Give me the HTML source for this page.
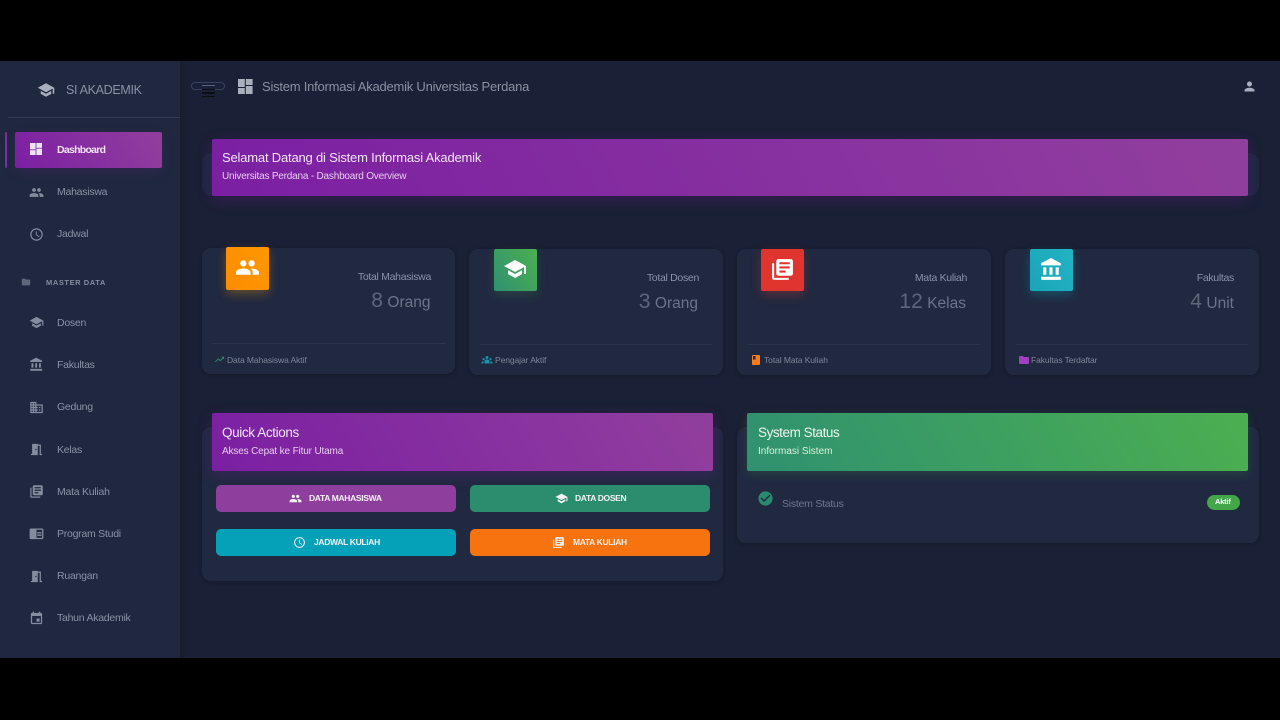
<!DOCTYPE html>
<html><head><meta charset="utf-8"><title>SI Akademik</title>
<style>
*{box-sizing:border-box}
html,body{margin:0;padding:0;width:1280px;height:720px;overflow:hidden;background:#000;font-family:"Liberation Sans",sans-serif}
.a{position:absolute}
#app{position:absolute;left:0;top:61px;width:1280px;height:597px;background:#1a2035;overflow:hidden}
#root{position:absolute;left:0;top:-61px;width:1280px;height:720px;filter:blur(.35px)}
.t{position:absolute;white-space:nowrap;line-height:1}
.card{position:absolute;background:#202940;border-radius:9px;box-shadow:0 1px 4px rgba(0,0,0,.2)}
.hdr{position:absolute;border-radius:2px}
.pur{background:linear-gradient(60deg,#7b1fa2,#913f9e);box-shadow:0 4px 14px rgba(123,31,162,.3)}
.grn{background:linear-gradient(60deg,#2f9170,#4caf50);box-shadow:0 3px 10px rgba(76,175,80,.2)}
.box{position:absolute;width:43px;height:42px;border-radius:2px}
.line{position:absolute;height:1px;background:#2a3550}
svg{position:absolute;display:block}
.nav{color:#8b92a6;font-size:10.5px;letter-spacing:-.25px;left:57px}
.btn{position:absolute;height:27px;border-radius:5px;width:240px}
.bt{color:#f2f2f2;font-size:8.5px;font-weight:bold;letter-spacing:-.33px}
.lab{color:#8b92a6;font-size:10.5px;letter-spacing:-.3px}
.num{color:#5f6679;font-size:21px}
.unit{color:#6d7487;font-size:15.5px}
.foot{color:#7f8699;font-size:8.5px;letter-spacing:-.08px}
.ni{left:28.5px}
</style></head><body>
<svg width="0" height="0" style="position:absolute"><defs>
<symbol id="school" viewBox="0 0 24 24"><path d="M5 13.18v4L12 21l7-3.82v-4L12 17l-7-3.82zM12 3L1 9l11 6 9-4.91V17h2V9L12 3z"/></symbol>
<symbol id="people" viewBox="0 0 24 24"><path d="M16 11c1.66 0 2.99-1.34 2.99-3S17.66 5 16 5c-1.66 0-3 1.34-3 3s1.34 3 3 3zm-8 0c1.66 0 2.99-1.34 2.99-3S9.66 5 8 5C6.34 5 5 6.34 5 8s1.34 3 3 3zm0 2c-2.33 0-7 1.17-7 3.5V19h14v-2.5c0-2.33-4.67-3.5-7-3.5zm8 0c-.29 0-.62.02-.97.05 1.16.84 1.97 1.97 1.97 3.45V19h6v-2.5c0-2.33-4.67-3.5-7-3.5z"/></symbol>
<symbol id="clock" viewBox="0 0 24 24"><path d="M11.99 2C6.47 2 2 6.48 2 12s4.47 10 9.99 10C17.52 22 22 17.52 22 12S17.52 2 11.99 2zM12 20c-4.42 0-8-3.58-8-8s3.58-8 8-8 8 3.58 8 8-3.58 8-8 8zm.5-13H11v6l5.25 3.15.75-1.23-4.5-2.67z"/></symbol>
<symbol id="folder" viewBox="0 0 24 24"><path d="M10 4H4c-1.1 0-1.99.9-1.99 2L2 18c0 1.1.9 2 2 2h16c1.1 0 2-.9 2-2V8c0-1.1-.9-2-2-2h-8l-2-2z"/></symbol>
<symbol id="bank" viewBox="0 0 24 24"><path d="M4 10v7h3v-7H4zm6 0v7h3v-7h-3zM2 22h19v-3H2v3zm14-12v7h3v-7h-3zm-4.5-9L2 6v2h19V6l-9.5-5z"/></symbol>
<symbol id="domain" viewBox="0 0 24 24"><path d="M12 7V3H2v18h20V7H12zM6 19H4v-2h2v2zm0-4H4v-2h2v2zm0-4H4V9h2v2zm0-4H4V5h2v2zm4 12H8v-2h2v2zm0-4H8v-2h2v2zm0-4H8V9h2v2zm0-4H8V5h2v2zm10 12h-8v-2h2v-2h-2v-2h2v-2h-2V9h8v10zm-2-8h-2v2h2v-2zm0 4h-2v2h2v-2z"/></symbol>
<symbol id="room" viewBox="0 0 24 24"><path d="M14 6v15H3v-2h2V3h9v1h5v15h2v2h-4V6h-3zm-4 5v2h2v-2h-2z"/></symbol>
<symbol id="lib" viewBox="0 0 24 24"><path d="M4 6H2v14c0 1.1.9 2 2 2h14v-2H4V6zm16-4H8c-1.1 0-2 .9-2 2v12c0 1.1.9 2 2 2h12c1.1 0 2-.9 2-2V4c0-1.1-.9-2-2-2zm-1 9H9V9h10v2zm-4 4H9v-2h6v2zm4-8H9V5h10v2z"/></symbol>
<symbol id="reader" viewBox="0 0 24 24"><path d="M13 12h7v1.5h-7zm0-2.5h7V11h-7zm0 5h7V16h-7zM21 4H3c-1.1 0-2 .9-2 2v13c0 1.1.9 2 2 2h18c1.1 0 2-.9 2-2V6c0-1.1-.9-2-2-2zm0 15h-9V6h9v13z"/></symbol>
<symbol id="event" viewBox="0 0 24 24"><path d="M17 12h-5v5h5v-5zM16 1v2H8V1H6v2H5c-1.11 0-1.99.9-1.99 2L3 19c0 1.1.89 2 2 2h14c1.1 0 2-.9 2-2V5c0-1.1-.9-2-2-2h-1V1h-2zm3 18H5V8h14v11z"/></symbol>
<symbol id="person" viewBox="0 0 24 24"><path d="M12 12c2.21 0 4-1.79 4-4s-1.79-4-4-4-4 1.79-4 4 1.79 4 4 4zm0 2c-2.67 0-8 1.34-8 4v2h16v-2c0-2.66-5.33-4-8-4z"/></symbol>
<symbol id="trend" viewBox="0 0 24 24"><path d="M16 6l2.29 2.29-4.88 4.88-4-4L2 16.59 3.41 18l6-6 4 4 6.3-6.29L22 12V6z"/></symbol>
<symbol id="check" viewBox="0 0 24 24"><path d="M12 2C6.48 2 2 6.48 2 12s4.48 10 10 10 10-4.48 10-10S17.52 2 12 2zm-2 15l-5-5 1.41-1.41L10 14.17l7.59-7.59L19 8l-9 9z"/></symbol>
<symbol id="book" viewBox="0 0 24 24"><path d="M18 2H6c-1.1 0-2 .9-2 2v16c0 1.1.9 2 2 2h12c1.1 0 2-.9 2-2V4c0-1.1-.9-2-2-2zM6 4h5v8l-2.5-1.5L6 12V4z"/></symbol>
<symbol id="groups" viewBox="0 0 24 24"><path d="M1 19v-2c0-1.5 2-2.6 4-2.8V19H1zm6 0v-5c0-1.7 2.5-3 5-3s5 1.3 5 3v5H7zm12 0v-4.8c2 .2 4 1.3 4 2.8v2h-4zM12 10a3 3 0 1 0 0-6 3 3 0 0 0 0 6zM5 12.5a2.2 2.2 0 1 0 0-4.4 2.2 2.2 0 0 0 0 4.4zm14 0a2.2 2.2 0 1 0 0-4.4 2.2 2.2 0 0 0 0 4.4z"/></symbol>
</defs></svg>

<div id="app"><div id="root">

<!-- main area -->
<svg style="left:238px;top:79px" width="15" height="15" viewBox="0 0 15 15" fill="#a9afbd"><rect x="0" y="0" width="6.8" height="8"/><rect x="0" y="9" width="6.8" height="6"/><rect x="7.8" y="0" width="6.8" height="6"/><rect x="7.8" y="7" width="6.8" height="8"/></svg>
<div class="a" style="left:191px;top:82px;width:34px;height:8px;border:1px solid #3a445e;border-radius:4px"></div>
<div class="a" style="left:202px;top:85px;width:13px;height:1px;background:#58627a"></div>
<div class="a" style="left:202px;top:88.5px;width:13px;height:1.5px;background:#0c0e16"></div>
<div class="a" style="left:202px;top:92px;width:13px;height:1.5px;background:#0c0e16"></div>
<div class="a" style="left:202px;top:95.5px;width:13px;height:1.5px;background:#0c0e16"></div>
<div class="t" style="left:262px;top:80px;font-size:13px;color:#8a91a3;letter-spacing:-.23px">Sistem Informasi Akademik Universitas Perdana</div>
<svg style="left:1242px;top:78.5px" width="15" height="15" fill="#a9afc0"><use href="#person"/></svg>

<!-- welcome -->
<div class="card" style="left:202px;top:153px;width:1057px;height:43px;background:#1e2740"></div>
<div class="hdr pur" style="left:212px;top:139px;width:1036px;height:57px"></div>
<div class="t" style="left:222px;top:151px;font-size:13px;color:#f3e6f6;letter-spacing:-.19px">Selamat Datang di Sistem Informasi Akademik</div>
<div class="t" style="left:222px;top:171.5px;font-size:10px;color:#e6cdec;letter-spacing:-.2px">Universitas Perdana - Dashboard Overview</div>

<!-- stat cards -->
<div class="card" style="left:202px;top:248px;width:253px;height:126px"></div>
<div class="box" style="left:226px;top:247px;height:43px;background:linear-gradient(60deg,#fb8c00,#ff9800);box-shadow:0 4px 10px rgba(255,152,0,.3)"></div>
<svg style="left:235px;top:255px" width="25" height="25" fill="#fff"><use href="#people"/></svg>
<div class="t lab" style="right:849px;top:272px">Total Mahasiswa</div>
<div class="t" style="right:849.5px;top:290px"><span class="num">8</span> <span class="unit">Orang</span></div>
<div class="line" style="left:212px;top:343px;width:234px"></div>
<svg style="left:214px;top:354px" width="11" height="11" fill="#2f8a70"><use href="#trend"/></svg>
<div class="t foot" style="left:227px;top:356px">Data Mahasiswa Aktif</div>

<div class="card" style="left:469px;top:249px;width:254px;height:126px"></div>
<div class="box" style="left:494px;top:249px;background:linear-gradient(60deg,#2f9170,#4caf50);box-shadow:0 4px 10px rgba(76,175,80,.2)"></div>
<svg style="left:503px;top:257px" width="24" height="24" fill="#fff"><use href="#school"/></svg>
<div class="t lab" style="right:581px;top:273px">Total Dosen</div>
<div class="t" style="right:582px;top:291px"><span class="num">3</span> <span class="unit">Orang</span></div>
<div class="line" style="left:480px;top:344px;width:232px"></div>
<svg style="left:481px;top:354px" width="12" height="12" fill="#1a93ad"><use href="#groups"/></svg>
<div class="t foot" style="left:495px;top:356px">Pengajar Aktif</div>

<div class="card" style="left:737px;top:249px;width:254px;height:126px"></div>
<div class="box" style="left:761px;top:249px;background:#e0352f;box-shadow:0 4px 10px rgba(229,57,53,.3)"></div>
<svg style="left:770px;top:257px" width="25" height="25" fill="#fff"><use href="#lib"/></svg>
<div class="t lab" style="right:313px;top:273px">Mata Kuliah</div>
<div class="t" style="right:314px;top:291px"><span class="num">12</span> <span class="unit">Kelas</span></div>
<div class="line" style="left:748px;top:344px;width:232px"></div>
<svg style="left:750px;top:354px" width="12" height="12" fill="#f57c1a"><use href="#book"/></svg>
<div class="t foot" style="left:764px;top:356px">Total Mata Kuliah</div>

<div class="card" style="left:1005px;top:249px;width:254px;height:126px"></div>
<div class="box" style="left:1030px;top:249px;background:linear-gradient(60deg,#1aa5b8,#22b3c4);box-shadow:0 4px 10px rgba(0,172,193,.3)"></div>
<svg style="left:1039px;top:257px" width="25" height="25" fill="#fff"><use href="#bank"/></svg>
<div class="t lab" style="right:46px;top:273px">Fakultas</div>
<div class="t" style="right:46px;top:291px"><span class="num">4</span> <span class="unit">Unit</span></div>
<div class="line" style="left:1016px;top:344px;width:232px"></div>
<svg style="left:1018px;top:354px" width="12" height="12" fill="#a040c0"><use href="#folder"/></svg>
<div class="t foot" style="left:1031px;top:356px">Fakultas Terdaftar</div>

<!-- quick actions -->
<div class="card" style="left:202px;top:427px;width:521px;height:154px"></div>
<div class="hdr pur" style="left:212px;top:413px;width:501px;height:58px"></div>
<div class="t" style="left:222px;top:426px;font-size:13.5px;color:#f3e6f6;letter-spacing:-.38px">Quick Actions</div>
<div class="t" style="left:222px;top:446.5px;font-size:10px;color:#e6cdec;letter-spacing:-.15px">Akses Cepat ke Fitur Utama</div>
<div class="btn" style="left:216px;top:485px;background:#8e3f9e"></div>
<svg style="left:289px;top:492px" width="13" height="13" fill="#f2f2f2"><use href="#people"/></svg>
<div class="t bt" style="left:309px;top:494px">DATA MAHASISWA</div>
<div class="btn" style="left:470px;top:485px;background:#2c8d6e"></div>
<svg style="left:555px;top:492px" width="13" height="13" fill="#f2f2f2"><use href="#school"/></svg>
<div class="t bt" style="left:575px;top:494px">DATA DOSEN</div>
<div class="btn" style="left:216px;top:529px;background:#04a1b8"></div>
<svg style="left:293px;top:536px" width="13" height="13" fill="#f2f2f2"><use href="#clock"/></svg>
<div class="t bt" style="left:314px;top:538px">JADWAL KULIAH</div>
<div class="btn" style="left:470px;top:529px;background:#f6730f"></div>
<svg style="left:552px;top:536px" width="13" height="13" fill="#f2f2f2"><use href="#lib"/></svg>
<div class="t bt" style="left:573px;top:538px">MATA KULIAH</div>

<!-- system status -->
<div class="card" style="left:737px;top:427px;width:522px;height:116px"></div>
<div class="hdr grn" style="left:747px;top:413px;width:501px;height:58px"></div>
<div class="t" style="left:758px;top:426px;font-size:13.5px;color:#eef7ee;letter-spacing:-.44px">System Status</div>
<div class="t" style="left:758px;top:446.5px;font-size:10px;color:#dcefdc">Informasi Sistem</div>
<svg style="left:757px;top:490px" width="17" height="17" fill="#2a8a70"><use href="#check"/></svg>
<div class="t" style="left:782px;top:498.5px;font-size:10.5px;color:#6f7690;letter-spacing:-.24px">Sistem Status</div>
<div class="a" style="left:1207px;top:495px;width:33px;height:15px;border-radius:8px;background:#43a74a"></div>
<div class="t" style="left:1215px;top:498px;font-size:7.5px;font-weight:bold;color:#fff;letter-spacing:-.2px">Aktif</div>

<!-- sidebar -->
<div class="a" style="left:0;top:61px;width:180px;height:597px;background:#1f283e;box-shadow:2px 0 6px rgba(0,0,0,.12)"></div>
<div class="a" style="left:8px;top:117px;width:172px;height:1px;background:#323c55"></div>
<svg style="left:37px;top:81px" width="18" height="18" fill="#a9afbd"><use href="#school"/></svg>
<div class="t" style="left:66px;top:84px;font-size:12.5px;color:#8a91a3;letter-spacing:-.32px">SI AKADEMIK</div>

<div class="a" style="left:4.5px;top:132px;width:2.5px;height:36px;background:#7b2fa0;border-radius:2px"></div>
<div class="a" style="left:15px;top:132px;width:147px;height:36px;border-radius:2px;background:linear-gradient(60deg,#7b1fa2,#913f9e);box-shadow:0 4px 12px rgba(123,31,162,.18)"></div>
<svg style="left:30px;top:143px" width="12" height="12" viewBox="0 0 12 12" fill="#efe3f3"><rect width="5.6" height="6.4"/><rect y="7.2" width="5.6" height="4.8"/><rect x="6.4" width="5.6" height="4.8"/><rect x="6.4" y="5.6" width="5.6" height="6.4"/></svg>
<div class="t" style="left:57px;top:145px;font-size:10.5px;font-weight:bold;color:#f0e4f4;letter-spacing:-.72px">Dashboard</div>

<svg class="ni" style="top:184.5px" width="15" height="15" fill="#858c9f"><use href="#people"/></svg>
<div class="t nav" style="top:187px">Mahasiswa</div>
<svg class="ni" style="top:226.5px" width="15" height="15" fill="#858c9f"><use href="#clock"/></svg>
<div class="t nav" style="top:229px">Jadwal</div>

<svg style="left:21px;top:277px" width="10" height="10" fill="#5f6679"><use href="#folder"/></svg>
<div class="t" style="left:46px;top:279px;font-size:7.5px;font-weight:bold;color:#858c9f;letter-spacing:.58px">MASTER DATA</div>

<svg class="ni" style="top:314.5px" width="15" height="15" fill="#858c9f"><use href="#school"/></svg>
<div class="t nav" style="top:318px">Dosen</div>
<svg class="ni" style="top:357px" width="15" height="15" fill="#858c9f"><use href="#bank"/></svg>
<div class="t nav" style="top:360px">Fakultas</div>
<svg class="ni" style="top:399.5px" width="15" height="15" fill="#858c9f"><use href="#domain"/></svg>
<div class="t nav" style="top:402px">Gedung</div>
<svg class="ni" style="top:441.5px" width="15" height="15" fill="#858c9f"><use href="#room"/></svg>
<div class="t nav" style="top:445px">Kelas</div>
<svg class="ni" style="top:483.5px" width="15" height="15" fill="#858c9f"><use href="#lib"/></svg>
<div class="t nav" style="top:487px">Mata Kuliah</div>
<svg class="ni" style="top:526px" width="15" height="15" fill="#858c9f"><use href="#reader"/></svg>
<div class="t nav" style="top:529px">Program Studi</div>
<svg class="ni" style="top:568.5px" width="15" height="15" fill="#858c9f"><use href="#room"/></svg>
<div class="t nav" style="top:571px">Ruangan</div>
<svg class="ni" style="top:610.5px" width="15" height="15" fill="#858c9f"><use href="#event"/></svg>
<div class="t nav" style="top:613px">Tahun Akademik</div>

</div></div>
</body></html>
